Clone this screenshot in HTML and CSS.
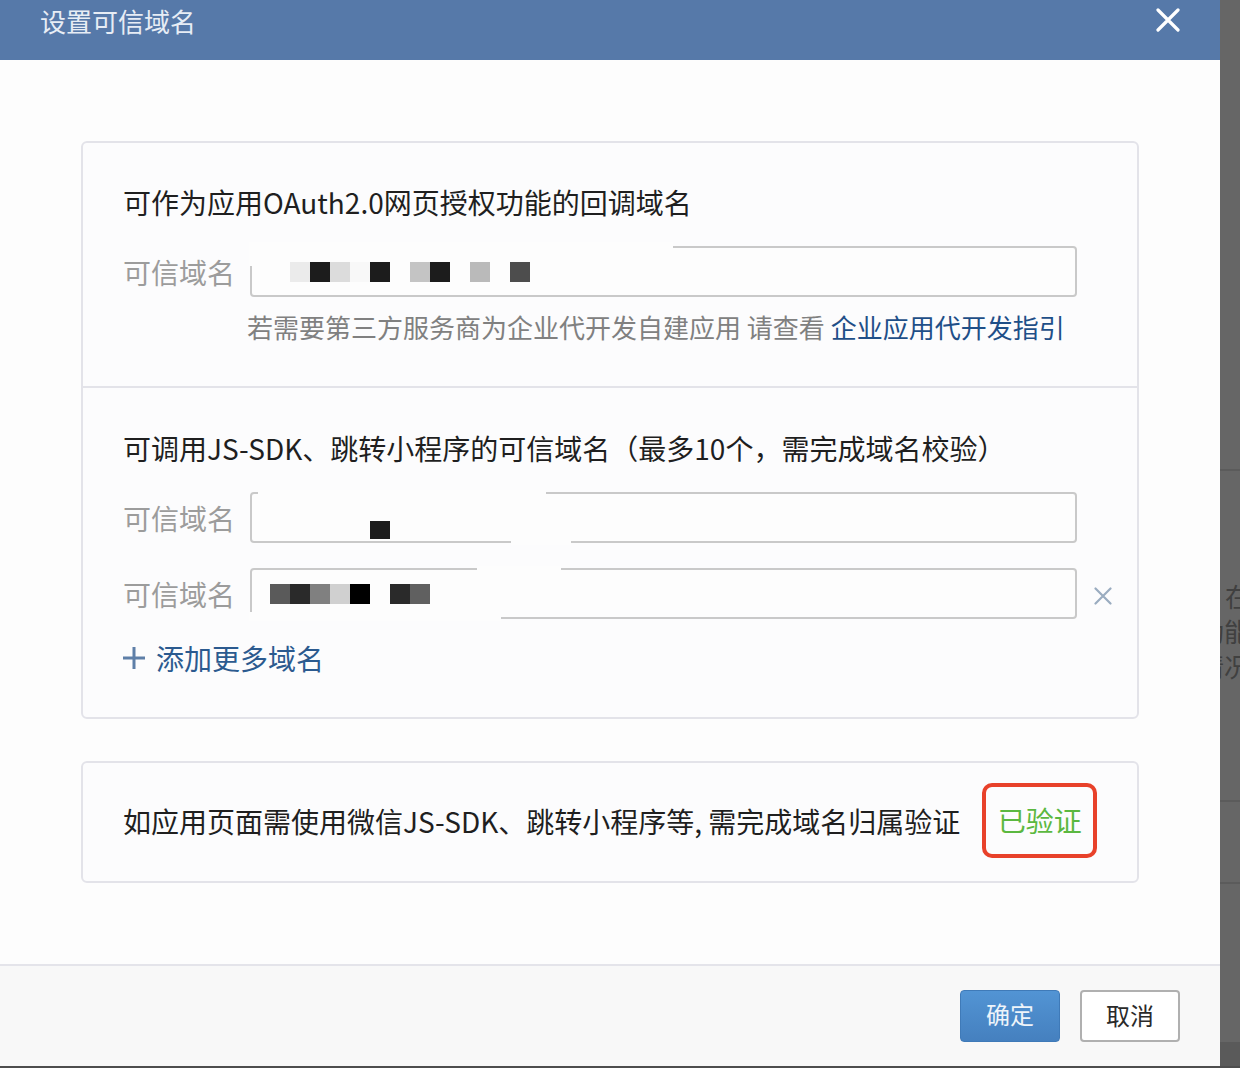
FILE: index.html
```html
<!DOCTYPE html>
<html lang="zh-CN">
<head>
<meta charset="utf-8">
<title>设置可信域名</title>
<link rel="stylesheet" href="styles.css">
</head>
<body>
<div class="page">
  <div class="modal">
    <div class="modal-header">
      <span class="modal-title">设置可信域名</span>
      <button class="close-btn" aria-label="关闭">
        <svg width="24" height="24" viewBox="0 0 24 24"><path d="M2 2 L22 22 M22 2 L2 22" stroke="#ffffff" stroke-width="3.2" stroke-linecap="round" fill="none"/></svg>
      </button>
    </div>
    <div class="modal-body">
      <div class="card">
        <div class="section">
          <div class="section-title">可作为应用OAuth2.0网页授权功能的回调域名</div>
          <div class="field-row">
            <span class="field-label">可信域名</span>
            <div class="field-input cells-a">
              <span class="smudge sm-a1"></span>
              <span class="px c-eb"></span><span class="px c-1c"></span><span class="px c-dc"></span><span class="px c-fa"></span><span class="px c-1c"></span><span class="px"></span><span class="px c-c4"></span><span class="px c-1c"></span><span class="px"></span><span class="px c-bc"></span><span class="px"></span><span class="px c-4d"></span>
            </div>
          </div>
          <div class="help">若需要第三方服务商为企业代开发自建应用 请查看 <a class="help-link">企业应用代开发指引</a></div>
        </div>
        <div class="section">
          <div class="section-title">可调用JS-SDK、跳转小程序的可信域名（最多10个，需完成域名校验）</div>
          <div class="field-row">
            <span class="field-label">可信域名</span>
            <div class="field-input cells-b">
              <span class="smudge sm-b1"></span>
              <span class="smudge sm-b2"></span>
              <span class="px px-low c-1c"></span>
            </div>
          </div>
          <div class="field-row field-row-next">
            <span class="field-label">可信域名</span>
            <div class="field-input cells-c">
              <span class="smudge sm-c1"></span>
              <span class="smudge sm-c2"></span>
              <span class="px c-5a"></span><span class="px c-2a"></span><span class="px c-80"></span><span class="px c-d0"></span><span class="px c-00"></span><span class="px"></span><span class="px c-2a"></span><span class="px c-60"></span>
            </div>
            <span class="remove-btn">
              <svg width="18" height="18" viewBox="0 0 18 18"><path d="M1.5 1.5 L16.5 16.5 M16.5 1.5 L1.5 16.5" stroke="#9aacc0" stroke-width="2.2" stroke-linecap="round" fill="none"/></svg>
            </span>
          </div>
          <div class="add-more">
            <svg class="add-icon" width="24" height="24" viewBox="0 0 24 24"><path d="M12 1 V23 M1 12 H23" stroke="#5e7fa8" stroke-width="3" fill="none"/></svg>
            <span>添加更多域名</span>
          </div>
        </div>
      </div>
      <div class="card card-verify">
        <span class="verify-text">如应用页面需使用微信JS-SDK、跳转小程序等, 需完成域名归属验证</span>
        <span class="verified">已验证</span>
      </div>
    </div>
    <div class="modal-footer">
      <button class="btn btn-primary">确定</button>
      <button class="btn btn-default">取消</button>
    </div>
  </div>
  <div class="backdrop-strip">
    <div class="bg-row bg-row1"></div>
    <div class="bg-row bg-row2">
      <div class="bg-line bg-line-first">在</div>
      <div class="bg-line">功能</div>
      <div class="bg-line">情况</div>
    </div>
    <div class="bg-row bg-row3"></div>
    <div class="bg-row bg-row4"></div>
    <div class="bg-foot"></div>
  </div>
</div>
</body>
</html>
```

FILE: styles.css
```css
* {
  box-sizing: border-box;
}

html, body {
  margin: 0;
  padding: 0;
}

body {
  background: #4d4d4d;
  font-family: "Noto Sans CJK SC", "Noto Sans", "Liberation Sans", sans-serif;
  overflow: hidden;
  width: 1240px;
  height: 1068px;
}

.page {
  display: flex;
  width: 1240px;
  height: 1066px;
}

.modal {
  width: 1220px;
  height: 1066px;
  flex-shrink: 0;
  background: #fdfdfd;
  display: flex;
  flex-direction: column;
}

/* header */
.modal-header {
  height: 60px;
  background: #5679a9;
  display: flex;
  justify-content: space-between;
  align-items: flex-start;
  padding: 0 40px;
}

.modal-title {
  color: #e7edf5;
  font-size: 26px;
  line-height: 42px;
}

.close-btn {
  margin-top: 8px;
  padding: 0;
  border: 0;
  background: none;
  width: 24px;
  height: 24px;
  display: block;
}

.close-btn svg {
  display: block;
}

/* body */
.modal-body {
  flex: 1;
  padding: 81px 81px 0;
}

.card {
  border: 2px solid #e3e3e9;
  border-radius: 6px;
  background: #fcfcfd;
}

.section {
  padding: 39px 40px 41px;
}

.section + .section {
  border-top: 2px solid #e3e3e9;
  padding-top: 40px;
  padding-bottom: 39px;
}

.section-title {
  font-size: 28px;
  line-height: 40px;
  color: #1f1f1f;
  white-space: nowrap;
}

.field-row {
  display: flex;
  align-items: center;
  margin-top: 24px;
}

.field-row-next {
  margin-top: 25px;
}

.field-label {
  width: 127px;
  flex-shrink: 0;
  font-size: 28px;
  line-height: 40px;
  color: #9c9c9c;
}

.field-input {
  position: relative;
  width: 827px;
  flex-shrink: 0;
  height: 51px;
  border: 2px solid #c9c9c9;
  border-radius: 4px;
  background: #fdfdfd;
  display: flex;
  align-items: center;
}

.cells-a {
  padding-left: 38px;
}

.cells-b {
  padding-left: 118px;
}

.cells-c {
  padding-left: 18px;
}

.px {
  position: relative;
  width: 20px;
  height: 20px;
  flex-shrink: 0;
}

.px-low {
  align-self: flex-end;
  height: 18px;
  margin-bottom: 2px;
}

.c-eb { background: #ebebeb; }
.c-1c { background: #1c1c1c; }
.c-dc { background: #dcdcdc; }
.c-fa { background: #f8f8f8; }
.c-c4 { background: #c4c4c4; }
.c-bc { background: #bababa; }
.c-4d { background: #4d4d4d; }
.c-5a { background: #5a5a5a; }
.c-2a { background: #2a2a2a; }
.c-80 { background: #808080; }
.c-d0 { background: #d0d0d0; }
.c-00 { background: #000000; }
.c-60 { background: #606060; }

/* redaction smudges lying over the input borders */
.smudge {
  position: absolute;
  background: #fdfdfd;
}

.sm-a1 {
  left: -3px;
  top: -6px;
  width: 424px;
  height: 24px;
}

.sm-b1 {
  left: 6px;
  top: -4px;
  width: 288px;
  height: 9px;
}

.sm-b2 {
  left: 259px;
  bottom: -4px;
  width: 60px;
  height: 9px;
}

.sm-c1 {
  left: 225px;
  top: -4px;
  width: 84px;
  height: 9px;
}

.sm-c2 {
  left: -3px;
  bottom: -4px;
  width: 252px;
  height: 9px;
}

.remove-btn {
  margin-left: 17px;
  width: 18px;
  height: 18px;
  display: block;
  margin-top: 4px;
  flex-shrink: 0;
}

.remove-btn svg {
  display: block;
}

.help {
  margin-top: 12px;
  margin-left: 124px;
  font-size: 26px;
  line-height: 36px;
  color: #808080;
  white-space: nowrap;
}

.help-link {
  color: #1f4f88;
  text-decoration: none;
}

.add-more {
  margin-top: 19px;
  display: flex;
  align-items: center;
  height: 40px;
  color: #2b5a8f;
  font-size: 28px;
  line-height: 40px;
}

.add-icon {
  display: block;
  margin-left: -1px;
  margin-right: 10px;
}

/* verification card */
.card-verify {
  margin-top: 42px;
  padding: 20px 40px 23px;
  display: flex;
  align-items: center;
}

.verify-text {
  font-size: 28px;
  line-height: 40px;
  color: #1f1f1f;
  white-space: nowrap;
}

.verified {
  margin-left: 22px;
  height: 75px;
  width: 117px;
  border: 4px solid #e8412a;
  border-radius: 10px;
  font-size: 28px;
  line-height: 67px;
  color: #5bb840;
  text-align: center;
}

/* footer */
.modal-footer {
  border-top: 2px solid #e4e4ea;
  background: #f8f8f8;
  padding: 24px 40px;
  display: flex;
  justify-content: flex-end;
  gap: 20px;
}

.btn {
  width: 100px;
  height: 52px;
  border-radius: 4px;
  font-family: "Noto Sans CJK SC", "Noto Sans", sans-serif;
  font-size: 24px;
  line-height: 46px;
  padding: 0 0 4px;
}

.btn-primary {
  background: linear-gradient(#5294d4, #4580bf);
  border: 1px solid #3f7ab8;
  color: #eef4fa;
}

.btn-default {
  background: #ffffff;
  border: 2px solid #b0b0b0;
  color: #2a2a2a;
}

/* page behind the dialog */
.backdrop-strip {
  flex: 1;
  overflow: hidden;
  background: #666666;
  display: flex;
  flex-direction: column;
}

.bg-row {
  border-bottom: 2px solid #5b5b5b;
}

.bg-row1 {
  height: 471px;
}

.bg-row2 {
  height: 331px;
  padding-top: 107px;
}

.bg-row3 {
  height: 82px;
}

.bg-row4 {
  height: 158px;
  border-bottom: 0;
}

.bg-foot {
  flex: 1;
  background: #5a5a5a;
}

.bg-line {
  margin-left: -22px;
  font-size: 26px;
  line-height: 35px;
  height: 35px;
  color: #404040;
  white-space: nowrap;
}

.bg-line-first {
  margin-left: 5px;
}
```
